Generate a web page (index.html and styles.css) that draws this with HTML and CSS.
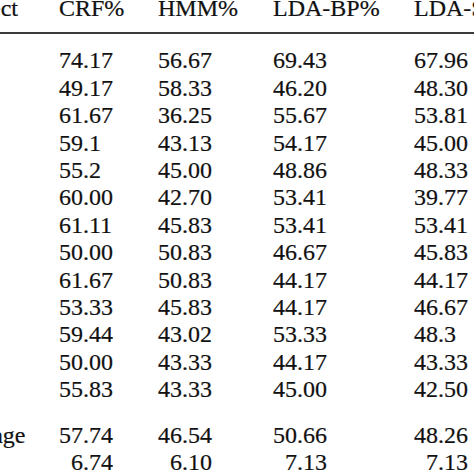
FILE: index.html
```html
<!DOCTYPE html>
<html>
<head>
<meta charset="utf-8">
<link rel="stylesheet" href="styles.css">
</head>
<body>
<table class="results">
  <colgroup>
    <col class="c-label"><col class="c-crf"><col class="c-hmm"><col class="c-bp"><col class="c-last">
  </colgroup>
  <thead>
    <tr><th>Subject</th><th>CRF%</th><th>HMM%</th><th>LDA-BP%</th><th>LDA-SVM%</th></tr>
  </thead>
  <tbody>
    <tr class="first"><td>1</td><td>74.17</td><td>56.67</td><td>69.43</td><td>67.96</td></tr>
    <tr><td>2</td><td>49.17</td><td>58.33</td><td>46.20</td><td>48.30</td></tr>
    <tr><td>3</td><td>61.67</td><td>36.25</td><td>55.67</td><td>53.81</td></tr>
    <tr><td>4</td><td>59.1</td><td>43.13</td><td>54.17</td><td>45.00</td></tr>
    <tr><td>5</td><td>55.2</td><td>45.00</td><td>48.86</td><td>48.33</td></tr>
    <tr><td>6</td><td>60.00</td><td>42.70</td><td>53.41</td><td>39.77</td></tr>
    <tr><td>7</td><td>61.11</td><td>45.83</td><td>53.41</td><td>53.41</td></tr>
    <tr><td>8</td><td>50.00</td><td>50.83</td><td>46.67</td><td>45.83</td></tr>
    <tr><td>9</td><td>61.67</td><td>50.83</td><td>44.17</td><td>44.17</td></tr>
    <tr><td>10</td><td>53.33</td><td>45.83</td><td>44.17</td><td>46.67</td></tr>
    <tr><td>11</td><td>59.44</td><td>43.02</td><td>53.33</td><td>48.3</td></tr>
    <tr><td>12</td><td>50.00</td><td>43.33</td><td>44.17</td><td>43.33</td></tr>
    <tr><td>13</td><td>55.83</td><td>43.33</td><td>45.00</td><td>42.50</td></tr>
    <tr class="avg"><td>Average</td><td>57.74</td><td>46.54</td><td>50.66</td><td>48.26</td></tr>
    <tr><td>Std</td><td class="ind">6.74</td><td class="ind">6.10</td><td class="ind">7.13</td><td class="ind">7.13</td></tr>
  </tbody>
</table>
</body>
</html>
```
FILE: styles.css
```css
html, body {
  margin: 0;
  padding: 0;
  background: #ffffff;
  overflow: hidden;
  width: 474px;
  height: 474px;
}

.results {
  border-collapse: collapse;
  table-layout: fixed;
  width: 640px;
  margin-left: -54px;
  margin-top: -5px;
  font-family: "Liberation Serif", "Times New Roman", serif;
  font-size: 24px;
  line-height: 27.4px;
  color: #111111;
  -webkit-text-stroke: 0.2px #111111;
  white-space: nowrap;
}

.c-label { width: 113px; }
.c-crf { width: 99px; }
.c-hmm { width: 115px; }
.c-bp { width: 141px; }
.c-last { width: 172px; }

.results th,
.results td {
  padding: 0;
  text-align: left;
  font-weight: normal;
  vertical-align: baseline;
}

.results thead th {
  padding-bottom: 10px;
  border-bottom: 2px solid #3a3a3a;
}

.results tr.first td {
  padding-top: 13px;
}

.results tr.avg td {
  padding-top: 18px;
}

.results td.ind {
  padding-left: 12px;
}
```
